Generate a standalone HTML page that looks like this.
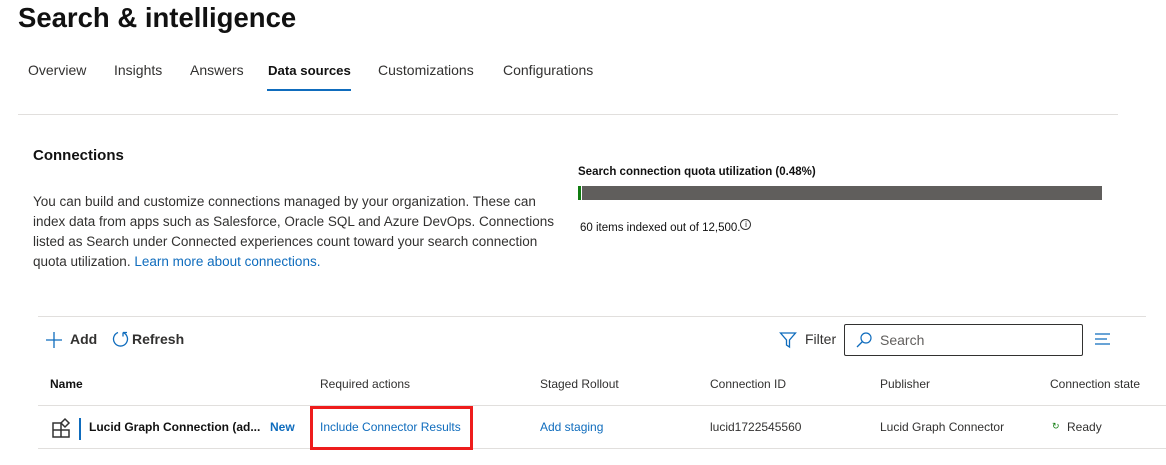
<!DOCTYPE html><html><head><style>
body{margin:0;width:1166px;height:465px;background:#fff;font-family:"Liberation Sans",sans-serif;color:#323130;position:relative;overflow:hidden}
.a{position:absolute;white-space:nowrap}
.t{font-size:14px;color:#323130;top:62px}
.h{font-size:12px;color:#323130;top:377px}
.r{font-size:12px;top:420px}
.l{color:#0f6cbd}
.line{position:absolute;height:1px;background:#e1dfdd}
</style></head><body>
<div class="a" style="left:18px;top:2px;font-size:27.5px;font-weight:bold;color:#111">Search &amp; intelligence</div>
<div class="a t" style="left:28px">Overview</div>
<div class="a t" style="left:114px">Insights</div>
<div class="a t" style="left:190px">Answers</div>
<div class="a t" style="left:268px;font-weight:bold;color:#111;font-size:13.2px;top:63px">Data sources</div>
<div class="a t" style="left:378px">Customizations</div>
<div class="a t" style="left:503px">Configurations</div>
<div class="a" style="left:267px;top:89px;width:84px;height:2px;background:#0f6cbd"></div>
<div class="line" style="left:18px;top:114px;width:1100px"></div>
<div class="a" style="left:33px;top:147px;font-size:15px;font-weight:bold;color:#111">Connections</div>
<div class="a" style="left:33px;top:192px;font-size:13.5px;line-height:20px;white-space:normal;width:525px;color:#323130">You can build and customize connections managed by your organization. These can index data from apps such as Salesforce, Oracle SQL and Azure DevOps. Connections listed as Search under Connected experiences count toward your search connection quota utilization. <span class="l">Learn more about connections.</span></div>
<div class="a" style="left:578px;top:166px;font-size:11.5px;font-weight:bold;color:#111">Search connection quota utilization (0.48%)</div>
<div class="a" style="left:578px;top:186px;width:524px;height:14px;background:#605e5c"></div>
<div class="a" style="left:578px;top:186px;width:3px;height:14px;background:#107c10;border-right:1px solid #fff"></div>
<div class="a" style="left:580px;top:219px;font-size:11.5px;color:#111">60 items indexed out of 12,500.<span style="display:inline-block;width:9px;height:9px;border:1px solid #333;border-radius:50%;font-size:8px;line-height:9px;text-align:center;vertical-align:4px">i</span></div>
<div class="line" style="left:38px;top:316px;width:1108px"></div>
<svg class="a" style="left:45px;top:331px" width="18" height="18"><path d="M9 1v16M1 9h16" stroke="#0f6cbd" stroke-width="1.3"/></svg>
<div class="a" style="left:70px;top:331px;font-size:14px;font-weight:bold;color:#323130">Add</div>
<svg class="a" style="left:111px;top:330px" width="19" height="19"><path d="M7 2.5A7 7 0 1 0 12 2.5M12 2.5v4M12 2.5h4" fill="none" stroke="#0f6cbd" stroke-width="1.3"/></svg>
<div class="a" style="left:132px;top:331px;font-size:14px;font-weight:bold;color:#323130">Refresh</div>
<svg class="a" style="left:779px;top:331px" width="18" height="18"><path d="M1.5 2h15l-6 7v7l-3-2V9z" fill="none" stroke="#0f6cbd" stroke-width="1.3"/></svg>
<div class="a" style="left:805px;top:331px;font-size:14px;color:#323130">Filter</div>
<div class="a" style="left:844px;top:324px;width:237px;height:30px;border:1px solid #323130;border-radius:2px"></div>
<svg class="a" style="left:855px;top:331px" width="18" height="18"><circle cx="11" cy="7" r="5" fill="none" stroke="#0f6cbd" stroke-width="1.2"/><path d="M7.5 10.5L2 16" stroke="#0f6cbd" stroke-width="1.3"/></svg>
<div class="a" style="left:880px;top:332px;font-size:14px;color:#605e5c">Search</div>
<svg class="a" style="left:1094px;top:332px" width="18" height="14"><path d="M1 2h15M1 7h12M1 12h15" stroke="#0f6cbd" stroke-width="1.2"/></svg>
<div class="a h" style="left:50px;font-weight:bold;color:#111">Name</div>
<div class="a h" style="left:320px">Required actions</div>
<div class="a h" style="left:540px">Staged Rollout</div>
<div class="a h" style="left:710px">Connection ID</div>
<div class="a h" style="left:880px">Publisher</div>
<div class="a h" style="left:1050px">Connection state</div>
<div class="line" style="left:38px;top:405px;width:1128px"></div>
<div class="line" style="left:38px;top:448px;width:1128px"></div>
<svg class="a" style="left:51px;top:417px" width="22" height="22"><path d="M2 6h8v14H2zM2 13h16v7H10M10 13V6" fill="none" stroke="#333" stroke-width="1.5"/><path d="M14 2l4 4-4 4-4-4z" fill="none" stroke="#333" stroke-width="1.5"/></svg>
<div class="a" style="left:79px;top:418px;width:2px;height:22px;background:#0f6cbd"></div>
<div class="a r" style="left:89px;font-weight:bold;color:#111">Lucid Graph Connection (ad...</div>
<div class="a r l" style="left:270px;font-weight:bold">New</div>
<div class="a" style="left:310px;top:406px;width:157px;height:38px;border:3px solid #ee1c1c;background:#fff"></div>
<div class="a r l" style="left:320px">Include Connector Results</div>
<div class="a r l" style="left:540px">Add staging</div>
<div class="a r" style="left:710px">lucid1722545560</div>
<div class="a r" style="left:880px">Lucid Graph Connector</div>
<div class="a" style="left:1052px;top:421px;font-size:9px;color:#107c10">&#8635;</div>
<div class="a r" style="left:1067px">Ready</div>
</body></html>
